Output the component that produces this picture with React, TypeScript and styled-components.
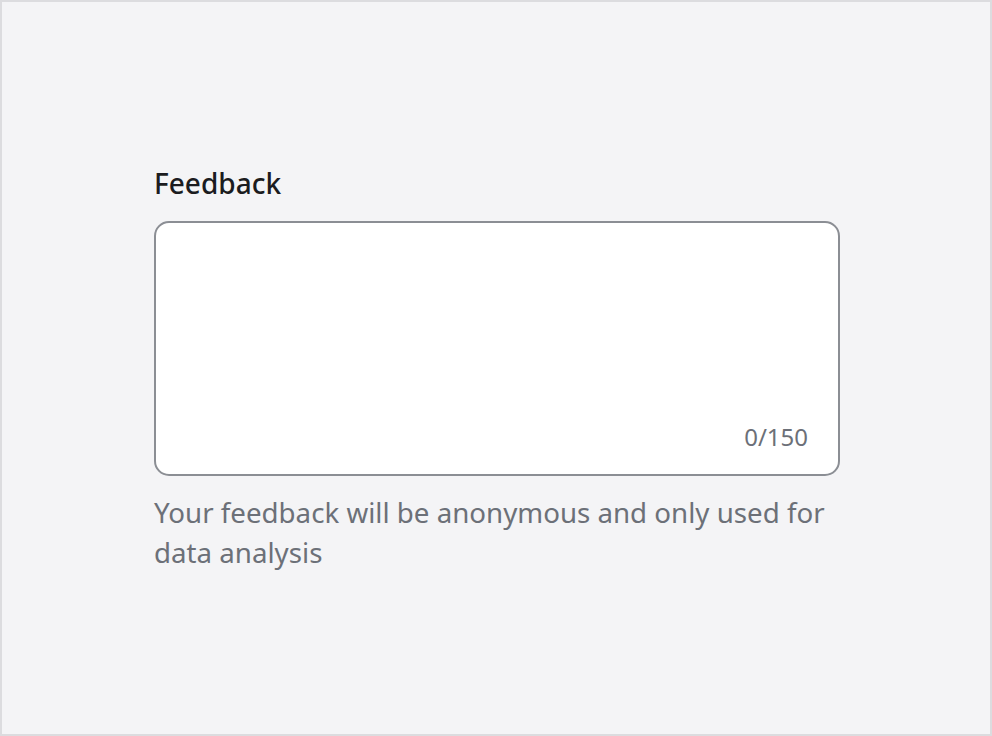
import React from 'react';
import styled, { createGlobalStyle } from 'styled-components';

const GlobalStyle = createGlobalStyle`
  html, body {
    margin: 0;
    padding: 0;
  }
  body {
    font-family: "Noto Sans", "Open Sans", sans-serif;
    background: #f4f4f6;
  }
`;

const Page = styled.div`
  box-sizing: border-box;
  width: 992px;
  height: 736px;
  border: 2px solid #dcdcdf;
  padding-left: 2px;
  background: #f4f4f6;
  display: flex;
  align-items: center;
  justify-content: center;
`;

const Field = styled.div`
  width: 686px;
  display: flex;
  flex-direction: column;
`;

const Label = styled.label`
  font-size: 28px;
  line-height: 36px;
  font-weight: 500;
  color: #1b1c20;
  margin-bottom: 20px;
`;

const Box = styled.div`
  position: relative;
  box-sizing: border-box;
  height: 255px;
  background: #ffffff;
  border: 2px solid #8b8e94;
  border-radius: 15px;
`;

const Input = styled.textarea`
  box-sizing: border-box;
  width: 100%;
  height: 100%;
  border: none;
  outline: none;
  resize: none;
  background: transparent;
  padding: 18px 28px 48px;
  font-family: inherit;
  font-size: 26px;
  color: #1b1c20;
`;

const Counter = styled.span`
  position: absolute;
  right: 30px;
  bottom: 22px;
  font-size: 24px;
  line-height: 30px;
  color: #6c7078;
`;

const Hint = styled.p`
  margin: 16px 0 0;
  font-size: 27.7px;
  line-height: 40px;
  color: #6c7078;
`;

export default function App() {
  return (
    <>
      <GlobalStyle />
      <Page>
        <Field>
          <Label htmlFor="feedback">Feedback</Label>
          <Box>
            <Input id="feedback" maxLength={150} />
            <Counter>0/150</Counter>
          </Box>
          <Hint>Your feedback will be anonymous and only used for data analysis</Hint>
        </Field>
      </Page>
    </>
  );
}
